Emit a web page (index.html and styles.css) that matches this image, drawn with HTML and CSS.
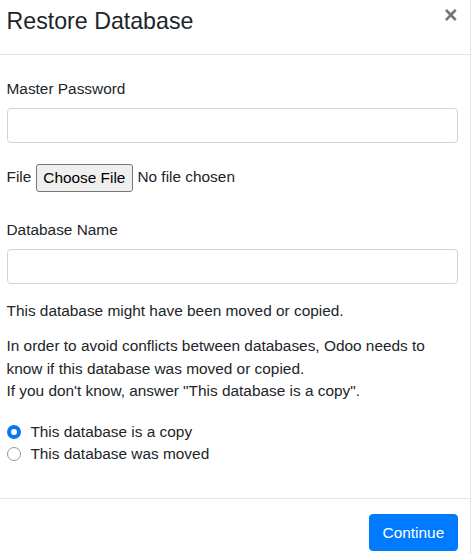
FILE: index.html
```html
<!DOCTYPE html>
<html lang="en">
<head>
<meta charset="utf-8">
<title>Restore Database</title>
<link rel="stylesheet" href="styles.css">
</head>
<body>
<div class="modal">
  <header class="modal-header">
    <h4 class="modal-title">Restore Database</h4>
    <button type="button" class="close" aria-label="Close">×</button>
  </header>
  <div class="modal-body">
    <div class="form-group">
      <label class="field-label" for="master">Master Password</label>
      <input class="form-control" id="master" type="password">
    </div>
    <div class="file-row">
      <span class="file-label">File</span>
      <span class="file-btn">Choose File</span>
      <span class="file-name">No file chosen</span>
    </div>
    <div class="form-group">
      <label class="field-label" for="dbname">Database Name</label>
      <input class="form-control" id="dbname" type="text">
    </div>
    <p class="text">This database might have been moved or copied.</p>
    <p class="text">In order to avoid conflicts between databases, Odoo needs to<br>know if this database was moved or copied.<br>If you don't know, answer "This database is a copy".</p>
    <div class="radios">
      <label class="radio"><input type="radio" name="copy" checked><span>This database is a copy</span></label>
      <label class="radio"><input type="radio" name="copy"><span>This database was moved</span></label>
    </div>
  </div>
  <footer class="modal-footer">
    <button type="button" class="btn-primary">Continue</button>
  </footer>
</div>
</body>
</html>
```

FILE: styles.css
```css
html, body {
  margin: 0;
  padding: 0;
  background: #fff;
}

body {
  font-family: "Liberation Sans", Arial, sans-serif;
  font-size: 15.4px;
  line-height: 22.3px;
  color: #212529;
}

.modal {
  width: 471px;
  box-sizing: border-box;
  border-right: 1px solid #e3e3e3;
  background: #fff;
}

.modal-header {
  display: flex;
  justify-content: space-between;
  align-items: flex-start;
  padding: 3.5px 12.5px 16px 6.5px;
  border-bottom: 1px solid #e2e5e8;
}

.modal-title {
  margin: 0;
  font-size: 23.2px;
  line-height: 34.5px;
  font-weight: normal;
  color: #212529;
}

.close {
  border: 0;
  background: transparent;
  padding: 0;
  margin: 0;
  font-family: "Liberation Sans", Arial, sans-serif;
  font-size: 23px;
  line-height: 23px;
  font-weight: bold;
  color: #000;
  opacity: 0.55;
  cursor: pointer;
}

.modal-body {
  padding: 22.5px 12.5px 32.5px 6.5px;
}

.form-group {
  margin-bottom: 15.4px;
}

.field-label {
  display: block;
  margin-bottom: 7.9px;
}

.form-control {
  display: block;
  box-sizing: border-box;
  width: 100%;
  height: 35px;
  margin: 0;
  padding: 5px 11px;
  border: 1px solid #ced4da;
  border-radius: 3.85px;
  background: #fff;
  font: inherit;
}

.file-row {
  display: flex;
  align-items: center;
  gap: 4.3px;
  margin-top: 21.3px;
  margin-bottom: 26.9px;
  height: 28.3px;
}

.file-label,
.file-name {
  position: relative;
  top: -1px;
}

.file-btn {
  box-sizing: border-box;
  padding: 4.15px 6.7px;
  line-height: 18px;
  background: #efefef;
  border: 1px solid #767676;
  border-radius: 3px;
  color: #000;
}

.text {
  margin: 0 0 13.4px 0;
}

.radios {
  margin-top: 18.4px;
}

.radio {
  display: flex;
  align-items: center;
  gap: 9.4px;
  height: 22.4px;
  padding-left: 0.5px;
}

.radio input {
  appearance: none;
  -webkit-appearance: none;
  box-sizing: border-box;
  width: 14px;
  height: 14px;
  margin: 0;
  border: 1px solid #9a9a9a;
  border-radius: 50%;
  background: #fff;
}

.radio input:checked {
  border: 4.5px solid #0b77f5;
}

.modal-footer {
  display: flex;
  justify-content: flex-end;
  padding: 15px 12.5px 10px 6.5px;
  border-top: 1px solid #e2e5e8;
}

.btn-primary {
  margin: 0;
  padding: 5.8px 12.3px;
  font-family: "Liberation Sans", Arial, sans-serif;
  font-size: 15.4px;
  line-height: 23.1px;
  color: #fff;
  background: #007bff;
  border: 1px solid #007bff;
  border-radius: 3.85px;
  cursor: pointer;
}
```
